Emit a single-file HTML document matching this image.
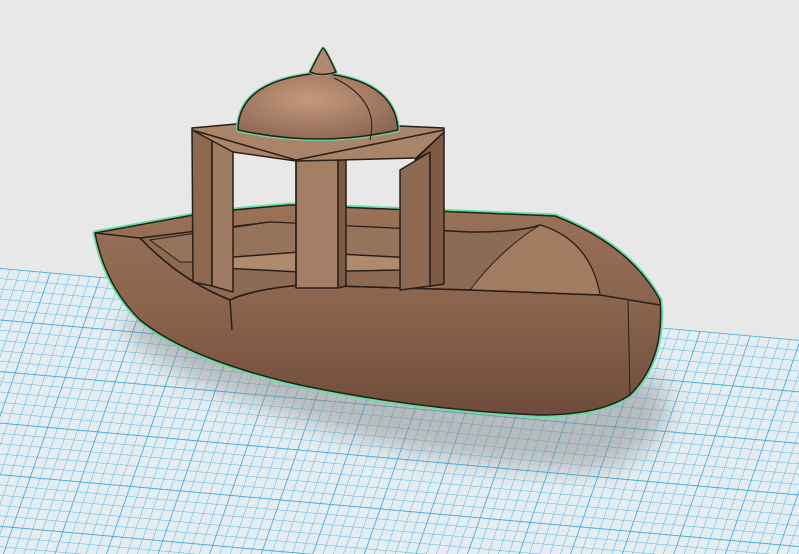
<!DOCTYPE html>
<html><head><meta charset="utf-8"><style>
html,body{margin:0;padding:0;width:799px;height:554px;overflow:hidden;background:#e8e8e8}
svg{display:block}
</style></head><body>
<svg width="799" height="554" viewBox="0 0 799 554" xmlns="http://www.w3.org/2000/svg">
<defs>
<pattern id="g" width="10" height="10" patternUnits="userSpaceOnUse" patternTransform="matrix(1,0.09,-0.35,1,0,268)">
<rect width="10" height="10" fill="#e4edf1"/>
<path d="M0 0H10M0 0V10" stroke="#4fb6e4" stroke-width="1"/>
</pattern>
<pattern id="g2" width="50" height="50" patternUnits="userSpaceOnUse" patternTransform="matrix(1,0.09,-0.35,1,0,268)">
<path d="M0 0H50M0 0V50" stroke="#2ea0d8" stroke-width="1.3" fill="none"/>
</pattern>
<linearGradient id="hull" x1="0" y1="0" x2="0" y2="1">
<stop offset="0" stop-color="#9a7258"/><stop offset="0.5" stop-color="#8a634c"/><stop offset="1" stop-color="#6e4c3a"/>
</linearGradient>
<radialGradient id="dome" cx="0.45" cy="0.4" r="0.7">
<stop offset="0" stop-color="#c49a7c"/><stop offset="1" stop-color="#8a6450"/>
</radialGradient>
<filter id="bl"><feGaussianBlur stdDeviation="12"/></filter>
</defs>
<polygon points="0,268 799,340 799,554 0,554" fill="url(#g)"/>
<polygon points="0,268 799,340 799,554 0,554" fill="url(#g2)"/>
<path d="M120 320 Q200 300 330 330 L660 380 Q690 440 600 470 Q420 470 250 400 Q150 370 120 320Z" fill="#8a8a8a" opacity="0.5" filter="url(#bl)"/>
<g stroke="#2a1e18" stroke-width="1.5" stroke-linejoin="round">
<path d="M95 233 L210 212 L290 205 L555 216 Q630 245 660 300 Q665 360 630 395 Q600 415 540 415 Q420 410 300 385 Q190 360 140 320 Q105 285 95 233Z" fill="url(#hull)" stroke="#5fe0a0" stroke-width="5"/>
<path d="M95 233 L210 212 L290 205 L555 216 Q630 245 660 300 Q665 360 630 395 Q600 415 540 415 Q420 410 300 385 Q190 360 140 320 Q105 285 95 233Z" fill="url(#hull)"/>
<path d="M140 238 L270 222 L470 232 Q520 232 540 225 Q590 240 600 295 L470 290 L300 285 Q250 290 230 300 Q180 280 140 238Z" fill="#8c6a54"/>
<path d="M150 240 L180 262 L290 262 L420 258 L430 230 L270 222Z" fill="#96735b" stroke-width="1"/>
<path d="M470 290 Q500 250 540 225 Q590 240 600 295Z" fill="#a27c61" stroke-width="1"/>
<path d="M95 233 L140 238 Q180 280 230 300 Q250 290 300 285 L470 290 L600 295 L660 305" fill="none"/>
<path d="M230 300 L232 330" fill="none"/>
<path d="M628 300 L630 395" fill="none" stroke-width="1"/>
<path d="M220 258 L300 252 L415 258 L400 270 L300 272 L222 268Z" fill="#b08a6d"/>
<path d="M192 130 L212 130 L212 286 L193 282Z" fill="#8e684f"/>
<path d="M212 130 L233 150 L233 292 L212 286Z" fill="#a07b62"/>
<path d="M296 160 L338 160 L338 288 L296 288Z" fill="#a47f65"/>
<path d="M338 160 L338 288 L346 286 L346 160Z" fill="#7d5a45"/>
<path d="M400 170 L430 152 L430 286 L400 290Z" fill="#8f6a52"/>
<path d="M415 160 L444 132 L444 284 L430 286 L430 152Z" fill="#7e5b46"/>
<path d="M192 128 L247 123 L378 125 L444 128 L444 132 L416 158 L340 160 L296 161 L233 152 L192 130Z" fill="#a98468"/>
<path d="M192 130 L296 160 L444 130" fill="none"/>
<path d="M296 160 L296 288" fill="none"/>
<path d="M238 130 Q238 80 320 73 Q395 80 398 130 Q320 148 238 130Z" fill="url(#dome)" stroke="#5fe0a0" stroke-width="4"/>
<path d="M238 130 Q238 80 320 73 Q395 80 398 130 Q320 148 238 130Z" fill="url(#dome)"/>
<path d="M334 78 Q380 100 370 140" fill="none" stroke-width="1"/>
<path d="M310 72 Q322 48 323 48 Q326 50 336 72 Q322 77 310 72Z" fill="#b08a70" stroke="#5fe0a0" stroke-width="3"/>
<path d="M310 72 Q322 48 323 48 Q326 50 336 72 Q322 77 310 72Z" fill="#b08a70"/>
</g>
</svg>
</body></html>
